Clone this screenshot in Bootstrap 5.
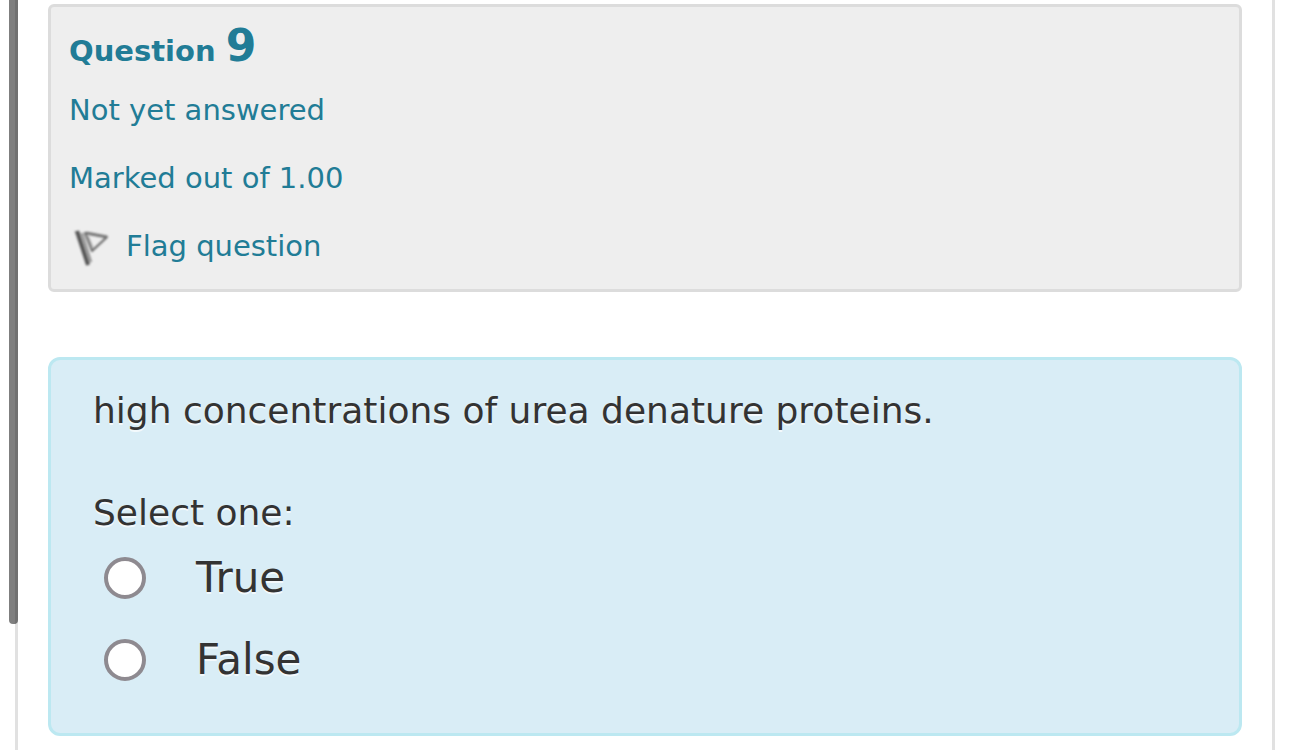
<!DOCTYPE html>
<html lang="en">
<head>
<meta charset="utf-8">
<meta name="viewport" content="width=device-width, initial-scale=1">
<title>Question 9</title>
<link href="https://cdn.jsdelivr.net/npm/bootstrap@5.3.0/dist/css/bootstrap.min.css" rel="stylesheet">
<style>
  body { font-family: Verdana, "DejaVu Sans", sans-serif; color: #333; background: #fff; }
  .quiz-page { margin: 0 15px; padding: 4px 30px 15px; border: solid #e1e1e1; border-width: 0 3px; }
  .scroll-thumb { left: 9px; width: 9px; height: 624px; background: #7f7f7f; border-right: 3px solid #717171; border-radius: 0 0 4px 4px; }
  .q-info { padding: 11px 18px 23px; margin-bottom: 65px; border: 3px solid #dcdcdc; border-radius: 6px; background: #eee; color: #217c96; font-size: 29px; line-height: 40px; }
  .q-info h2 { font-size: 29px; line-height: 56px; margin-bottom: 11px; }
  .q-info .q-number { font-size: 44px; line-height: 56px; }
  .q-info .q-line { margin-bottom: 28px; }
  .q-info a { color: inherit; gap: 16px; }
  .flag-icon { width: 41px; height: 40px; filter: blur(1px); }
  .q-body { padding: 23px 42px 32px; border: 3px solid #bce8f1; border-radius: 12px; background: #d9edf6; font-size: 36px; line-height: 56px; text-shadow: 0 2px 0 rgba(255,255,255,.7); }
  .q-body .q-text { margin-bottom: 50px; }
  .q-body legend { font-size: 36px; line-height: 48px; margin: 0; }
  .q-option { height: 82px; padding-left: 11px; gap: 50px; font-size: 42px; line-height: 60px; }
  .q-option .form-check-input { width: 42px; height: 42px; border: 4px solid #8e8a90; background-color: #fff; }
  .q-option .form-check-input:checked { background-color: #217c96; }
</style>
</head>
<body>
<div class="scroll-thumb position-absolute top-0" aria-hidden="true"></div>
<main class="quiz-page min-vh-100">
  <section class="q-info">
    <h2 class="fw-bold">Question <span class="q-number">9</span></h2>
    <p class="q-line">Not yet answered</p>
    <p class="q-line">Marked out of 1.00</p>
    <a href="#" class="d-flex align-items-center text-decoration-none">
      <svg class="flag-icon" viewBox="0 0 41 40" fill="none" stroke-linejoin="round" aria-hidden="true">
        <path d="M5 5 11 5 23 35 18 40Z" fill="#999" opacity=".4"/>
        <path d="M8 5 19 39" stroke="#555" stroke-width="4"/>
        <path d="M13 7 22 36" stroke="#888" stroke-width="2"/>
        <path d="M16 7 38 11 23 25Z" stroke="#666" stroke-width="2"/>
        <path d="M17 7 38 11" stroke="#777" stroke-width="3"/>
        <path d="M19 10 24 22" stroke="#888" stroke-width="1"/>
      </svg>
      <span>Flag question</span>
    </a>
  </section>
  <form class="q-body">
    <p class="q-text">high concentrations of urea denature proteins.</p>
    <fieldset>
      <legend>Select one:</legend>
      <div class="q-option d-flex align-items-center">
        <input class="form-check-input m-0 flex-shrink-0" type="radio" name="answer" id="answer-true" value="1">
        <label for="answer-true">True</label>
      </div>
      <div class="q-option d-flex align-items-center">
        <input class="form-check-input m-0 flex-shrink-0" type="radio" name="answer" id="answer-false" value="0">
        <label for="answer-false">False</label>
      </div>
    </fieldset>
  </form>
</main>
<script src="https://cdn.jsdelivr.net/npm/bootstrap@5.3.0/dist/js/bootstrap.bundle.min.js"></script>
</body>
</html>
